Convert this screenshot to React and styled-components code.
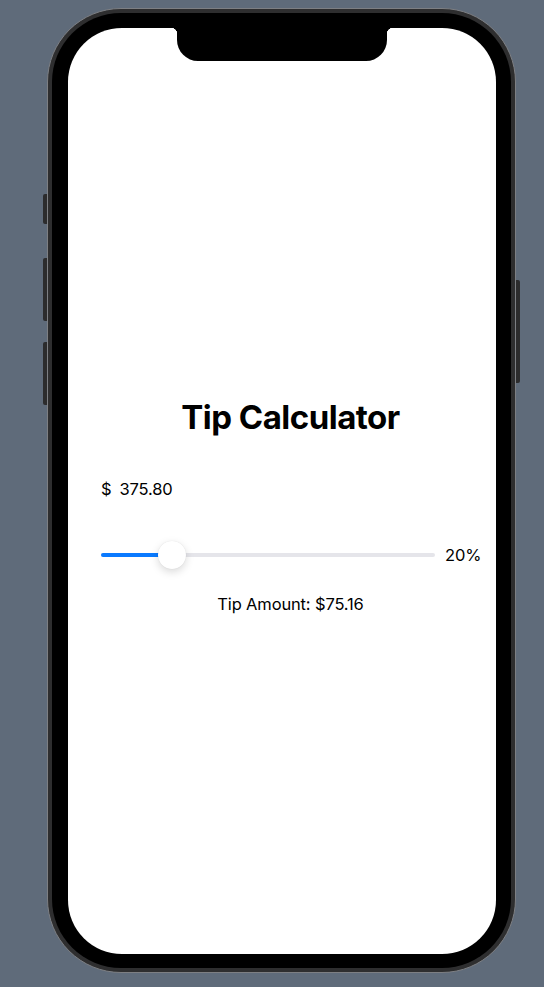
import styled, { createGlobalStyle } from 'styled-components';
import { useState } from 'react';

const GlobalStyle = createGlobalStyle`
    html, body {
        margin: 0;
        padding: 0;
        background: #5f6b7a;
        font-family: Inter, 'Liberation Sans', sans-serif;
    }
`;

const Page = styled.div`
    width: 544px;
    height: 987px;
    padding: 8px 0 0 47px;
    box-sizing: border-box;
`;

const Frame = styled.div`
    position: relative;
    width: 469px;
    height: 965px;
    box-sizing: border-box;
    border: 1px solid #7d7f83;
    border-radius: 74px;
    background: #2e2e2f;
    padding: 4px;
`;

const SideButton = styled.div`
    position: absolute;
    width: 4px;
    background: #2c2c2d;
    top: ${props => props.top}px;
    height: ${props => props.h}px;
    ${props => props.right ? 'right: -5px; border-radius: 0 2px 2px 0;' : 'left: -5px; border-radius: 2px 0 0 2px;'}
`;

const Bezel = styled.div`
    height: 100%;
    box-sizing: border-box;
    border-radius: 69px;
    background: #000;
    padding: 15px 15px 14px 16px;
`;

const Screen = styled.div`
    position: relative;
    height: 100%;
    border-radius: 54px;
    background: #fff;
    overflow: hidden;
    display: flex;
    flex-direction: column;
    align-items: center;
    padding: 369px 16px 0 33px;
    box-sizing: border-box;
`;

const Notch = styled.div`
    position: absolute;
    top: 0;
    left: 109px;
    width: 210px;
    height: 33px;
    background: #000;
    border-radius: 0 0 21px 21px;

    &::before, &::after {
        content: '';
        position: absolute;
        top: 0;
        width: 6px;
        height: 6px;
    }
    &::before {
        left: -6px;
        background: radial-gradient(circle at 0 100%, transparent 6px, #000 6.5px);
    }
    &::after {
        right: -6px;
        background: radial-gradient(circle at 100% 100%, transparent 6px, #000 6.5px);
    }
`;

const Title = styled.h1`
    margin: 0;
    font-size: 33px;
    line-height: 40px;
    font-weight: 700;
    letter-spacing: -0.5px;
    color: #000;
`;

const Content = styled.div`
    align-self: stretch;
    display: flex;
    flex-direction: column;
    font-size: 16.5px;
    letter-spacing: -0.15px;
    color: #000;
`;

const AmountRow = styled.div`
    margin-top: 41px;
    display: flex;
    align-items: center;
    gap: 8px;
    line-height: 22px;
`;

const AmountInput = styled.input`
    border: none;
    outline: none;
    padding: 0;
    width: 120px;
    font: inherit;
    letter-spacing: inherit;
    color: inherit;
    background: transparent;
`;

const SliderRow = styled.div`
    margin-top: 41px;
    display: flex;
    align-items: center;
    gap: 10px;
    height: 28px;
`;

const Track = styled.div`
    position: relative;
    flex: 1;
    height: 4px;
    border-radius: 2px;
    background: #e5e5ea;
`;

const Fill = styled.div`
    position: absolute;
    left: 0;
    top: 0;
    height: 100%;
    border-radius: 2px;
    background: #0a7aff;
`;

const Thumb = styled.div`
    position: absolute;
    top: 50%;
    width: 28px;
    height: 28px;
    margin: -14px 0 0 -14px;
    border-radius: 50%;
    background: #fff;
    box-shadow: 0 3px 8px rgba(0, 0, 0, 0.15), 0 0 1px rgba(0, 0, 0, 0.12);
`;

const RangeInput = styled.input`
    position: absolute;
    inset: -12px 0;
    width: 100%;
    margin: 0;
    opacity: 0;
    cursor: pointer;
`;

const Percent = styled.span`
    width: 35px;
`;

const TipText = styled.p`
    margin: 24px 0 0;
    text-align: center;
    line-height: 22px;
`;

const App = () => {
    const [bill, setBill] = useState('375.80');
    const [tip, setTip] = useState(20);

    const amount = ((parseFloat(bill) || 0) * tip / 100).toFixed(2);
    const pos = `calc(7px + (100% - 14px) * ${tip / 100})`;

    return (
        <>
            <GlobalStyle />
            <Page>
                <Frame>
                    <SideButton top={185} h={30} />
                    <SideButton top={249} h={63} />
                    <SideButton top={333} h={63} />
                    <SideButton right top={271} h={103} />
                    <Bezel>
                        <Screen>
                            <Notch />
                            <Title>Tip Calculator</Title>
                            <Content>
                                <AmountRow>
                                    <span>$</span>
                                    <AmountInput value={bill} onChange={(e) => setBill(e.target.value)} />
                                </AmountRow>
                                <SliderRow>
                                    <Track>
                                        <Fill style={{ width: pos }} />
                                        <Thumb style={{ left: pos }} />
                                        <RangeInput type="range" min="0" max="100" value={tip}
                                            onChange={(e) => setTip(Number(e.target.value))} />
                                    </Track>
                                    <Percent>{tip}%</Percent>
                                </SliderRow>
                                <TipText>Tip Amount: ${amount}</TipText>
                            </Content>
                        </Screen>
                    </Bezel>
                </Frame>
            </Page>
        </>
    );
};

export default App;
